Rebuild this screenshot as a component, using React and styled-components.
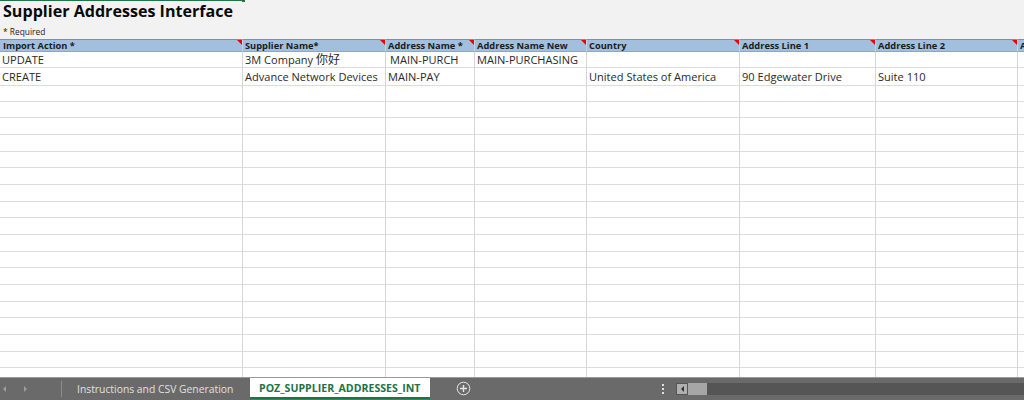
import React from "react";
import styled, { createGlobalStyle } from "styled-components";

const GlobalStyle = createGlobalStyle`
  html, body {
    margin: 0;
    padding: 0;
    background: #f2f2f2;
  }
  body {
    font-family: "Open Sans", "Noto Sans CJK SC", sans-serif;
  }
`;

const Page = styled.div`
  width: 1024px;
  height: 400px;
  display: flex;
  flex-direction: column;
  overflow: hidden;
`;

const TitleArea = styled.div`
  height: 39px;
  flex: none;
  background: #f2f2f2;
  display: flex;
  flex-direction: column;
`;

const TopRule = styled.div`
  position: relative;
  width: 242px;
  height: 1px;
  background: #217346;

  &::after {
    content: "";
    position: absolute;
    top: 0;
    left: 242px;
    width: 3px;
    height: 2px;
    background: #217346;
  }
`;

const Title = styled.div`
  font-weight: 700;
  font-size: 16.1px;
  line-height: 20px;
  color: #0a0a0a;
  padding-left: 3px;
  white-space: nowrap;
`;

const Required = styled.div`
  font-size: 8.4px;
  line-height: 12px;
  color: #1a1a1a;
  padding: 5px 0 0 3px;
`;

const Sheet = styled.div`
  flex: 1;
  min-height: 0;
  background: #fff;
  overflow: hidden;
`;

const Row = styled.div`
  display: grid;
  grid-template-columns: 243px 143px 89px 112px 153px 136px 142px 46px;
  height: ${(p) => p.$h}px;
  box-sizing: border-box;
`;

const Cell = styled.div`
  box-sizing: border-box;
  border-right: 1px solid #d6d6d6;
  border-bottom: 1px solid #dcdcdc;
  font-size: 11.05px;
  line-height: ${(p) => p.$line}px;
  color: #2a2a2a;
  padding-left: ${(p) => p.$indent}px;
  white-space: nowrap;
`;

const Cjk = styled.span`
  font-family: "Noto Sans CJK SC", sans-serif;
  font-size: 12px;
  line-height: 0;
`;

const HeadCell = styled.div`
  position: relative;
  box-sizing: border-box;
  background: #a2c0de;
  border-top: 1px solid #8d8d8d;
  border-bottom: 1px solid #8fa6bd;
  border-right: 1px solid #c4d3e2;
  font-size: 9.3px;
  font-weight: 700;
  line-height: 11px;
  color: #1c1c1c;
  padding-left: 2px;
  white-space: nowrap;
  overflow: hidden;

  &:first-child {
    padding-left: 3px;
  }
`;

const Flag = styled.span`
  position: absolute;
  top: 0;
  right: 0;
  width: 0;
  height: 0;
  border-top: 5px solid #f00000;
  border-left: 5px solid transparent;
`;

const Tabs = styled.div`
  height: 23px;
  flex: none;
  background: #6a6a6a;
  border-top: 1px solid #9a9a9a;
  box-sizing: border-box;
  display: flex;
  align-items: stretch;
  color: #e0e0e0;
`;

const NavArrows = styled.div`
  width: 62px;
  display: flex;
  align-items: center;
  gap: 18px;
  padding-left: 3px;
  box-sizing: border-box;
  border-right: 1px solid #8c8c8c;
  margin: 3px 0;
`;

const Arrow = styled.span`
  width: 0;
  height: 0;
  border-top: 3px solid transparent;
  border-bottom: 3px solid transparent;
  ${(p) => (p.$left ? "border-right" : "border-left")}: 3px solid #9c9c9c;
`;

const Tab = styled.div`
  width: 188px;
  box-sizing: border-box;
  display: flex;
  align-items: center;
  font-size: 10.35px;
  padding-left: 15px;
  white-space: nowrap;
`;

const ActiveTab = styled.div`
  width: 180px;
  box-sizing: border-box;
  display: flex;
  align-items: center;
  background: #fff;
  color: #217346;
  font-weight: 700;
  font-size: 10.6px;
  padding-left: 9px;
  white-space: nowrap;
  border-bottom: 2px solid #217346;
  margin-bottom: 1px;
`;

const AddButton = styled.button`
  width: 15px;
  height: 15px;
  margin: 3px 0 0 26px;
  padding: 0;
  background: none;
  border: none;
  display: block;
`;

const Splitter = styled.div`
  margin-left: auto;
  margin-right: 12px;
  width: 2px;
  display: flex;
  flex-direction: column;
  justify-content: center;
  gap: 2px;
`;

const Dot = styled.span`
  width: 2px;
  height: 2px;
  background: #e0e0e0;
`;

const ScrollTrack = styled.div`
  width: 348px;
  height: 12px;
  margin-top: 5px;
  background: #555;
  display: flex;
`;

const ScrollBtn = styled.div`
  width: 12px;
  background: #b0b0b0;
  display: flex;
  align-items: center;
  justify-content: center;
  border: 1px solid #555;
  box-sizing: border-box;
`;

const ScrollArrow = styled.span`
  width: 0;
  height: 0;
  border-top: 3px solid transparent;
  border-bottom: 3px solid transparent;
  border-right: 3px solid #333;
`;

const ScrollThumb = styled.div`
  width: 19px;
  background: #a6a6a6;
`;

const headers = [
  "Import Action *",
  "Supplier Name*",
  "Address Name *",
  "Address Name New",
  "Country",
  "Address Line 1",
  "Address Line 2",
  "Address Line 3",
];

const rows = [
  [
    "UPDATE",
    <>
      3M Company <Cjk>你好</Cjk>
    </>,
    " MAIN-PURCH",
    "MAIN-PURCHASING",
    "",
    "",
    "",
    "",
  ],
  ["CREATE", "Advance Network Devices", "MAIN-PAY", "", "United States of America", "90 Edgewater Drive", "Suite 110", ""],
];

const blankRows = 18;
const rowH = [16.5, 16.5, 17];

export default function App() {
  const body = [...rows, ...Array.from({ length: blankRows }, () => headers.map(() => ""))];
  return (
    <Page>
      <GlobalStyle />
      <TitleArea>
        <TopRule />
        <Title>Supplier Addresses Interface</Title>
        <Required>* Required</Required>
      </TitleArea>
      <Sheet>
        <Row $h={13}>
          {headers.map((h, i) => (
            <HeadCell key={h}>
              {h}
              {i < 7 && <Flag />}
            </HeadCell>
          ))}
        </Row>
        {body.map((row, r) => (
          <Row key={r} $h={r === 0 ? 16 : rowH[r % 3]}>
            {row.map((text, c) => (
              <Cell
                key={c}
                $line={r === 0 ? 15 : 17}
                $indent={typeof text === "string" && text.startsWith(" ") ? 4 : 2}
              >
                {typeof text === "string" ? text.trim() : text}
              </Cell>
            ))}
          </Row>
        ))}
      </Sheet>
      <Tabs>
        <NavArrows>
          <Arrow $left />
          <Arrow />
        </NavArrows>
        <Tab>Instructions and CSV Generation</Tab>
        <ActiveTab>POZ_SUPPLIER_ADDRESSES_INT</ActiveTab>
        <AddButton aria-label="New sheet">
          <svg width="15" height="15" viewBox="0 0 15 15">
            <circle cx="7.5" cy="7.5" r="6.3" fill="none" stroke="#e6e6e6" strokeWidth="1" />
            <path d="M7.5 4v7M4 7.5h7" stroke="#e6e6e6" strokeWidth="1.4" />
          </svg>
        </AddButton>
        <Splitter>
          <Dot />
          <Dot />
          <Dot />
        </Splitter>
        <ScrollTrack>
          <ScrollBtn>
            <ScrollArrow />
          </ScrollBtn>
          <ScrollThumb />
        </ScrollTrack>
      </Tabs>
    </Page>
  );
}
